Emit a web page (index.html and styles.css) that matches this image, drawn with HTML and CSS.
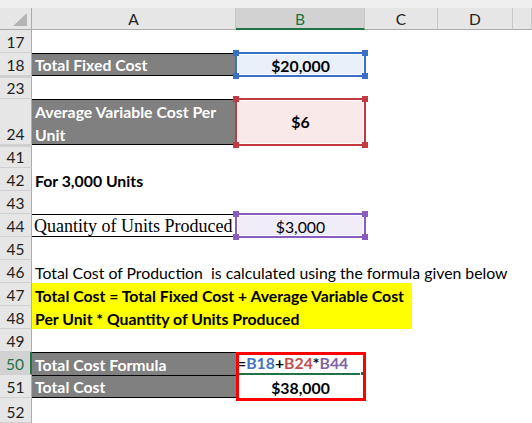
FILE: index.html
```html
<!DOCTYPE html>
<html>
<head>
<meta charset="utf-8">
<title>Total Cost of Production</title>
<link rel="stylesheet" href="styles.css">
</head>
<body>
<div class="topstrip"></div>
<div class="sheet">
  <div class="corner"><span class="tri"></span></div>
  <div class="ch">A</div>
  <div class="ch sel">B</div>
  <div class="ch">C</div>
  <div class="ch">D</div>
  <div class="ch"></div>

  <div class="rh">17</div><div class="c"></div><div class="c"></div><div class="c"></div><div class="c"></div><div class="c"></div>

  <div class="rh">18</div>
  <div class="c g gt gb">Total Fixed Cost</div>
  <div class="c b ref blue"><span class="frame"></span><i class="h tl"></i><i class="h tr"></i><i class="h bl"></i><i class="h br"></i><span class="v bold">$20,000</span></div>
  <div class="c"></div><div class="c"></div><div class="c"></div>

  <div class="rh dbl">23</div><div class="c"></div><div class="c"></div><div class="c"></div><div class="c"></div><div class="c"></div>

  <div class="rh">24</div>
  <div class="c g gt gb wrap">Average Variable Cost Per<br>Unit</div>
  <div class="c b ref red mid"><span class="frame"></span><i class="h tl"></i><i class="h tr"></i><i class="h bl"></i><i class="h br"></i><span class="v bold">$6</span></div>
  <div class="c"></div><div class="c"></div><div class="c"></div>

  <div class="rh dbl">41</div><div class="c"></div><div class="c"></div><div class="c"></div><div class="c"></div><div class="c"></div>

  <div class="rh">42</div><div class="c bold">For 3,000 Units</div><div class="c"></div><div class="c"></div><div class="c"></div><div class="c"></div>

  <div class="rh">43</div><div class="c"></div><div class="c"></div><div class="c"></div><div class="c"></div><div class="c"></div>

  <div class="rh">44</div>
  <div class="c gt gb serif">Quantity of Units Produced</div>
  <div class="c b ref purple"><span class="frame"></span><i class="h tl"></i><i class="h tr"></i><i class="h bl"></i><i class="h br"></i><span class="v">$3,000</span></div>
  <div class="c"></div><div class="c"></div><div class="c"></div>

  <div class="rh">45</div><div class="c"></div><div class="c"></div><div class="c"></div><div class="c"></div><div class="c"></div>

  <div class="rh">46</div><div class="c span pre">Total Cost of Production  is calculated using the formula given below</div>

  <div class="rh">47</div>
  <div class="note"><div class="note-box">Total Cost = Total Fixed Cost + Average Variable Cost<br>Per Unit * Quantity of Units Produced</div></div>
  <div class="rh">48</div>

  <div class="rh">49</div><div class="c"></div><div class="c"></div><div class="c"></div><div class="c"></div><div class="c"></div>

  <div class="rh active">50</div>
  <div class="c g gt">Total Cost Formula</div>
  <div class="c b edit"><span class="v bold"><span class="k">=</span><span class="f-blue">B18</span><span class="k">+</span><span class="f-red">B24</span><span class="k">*</span><span class="f-purple">B44</span></span><i class="fill"></i><span class="mark"></span></div>
  <div class="c"></div><div class="c"></div><div class="c"></div>

  <div class="rh">51</div>
  <div class="c g gt gb">Total Cost</div>
  <div class="c b"><span class="v bold">$38,000</span></div>
  <div class="c"></div><div class="c"></div><div class="c"></div>

  <div class="rh">52</div><div class="c"></div><div class="c"></div><div class="c"></div><div class="c"></div><div class="c"></div>
</div>
</body>
</html>
```

FILE: styles.css
```css
* {
  box-sizing: border-box;
  margin: 0;
  padding: 0;
}

body {
  margin: 0;
  width: 532px;
  height: 423px;
  overflow: hidden;
  background: #ffffff;
  font-family: Lato, "Open Sans", sans-serif;
  font-size: 15.8px;
  color: #000000;
}

.topstrip {
  height: 8px;
  background: #efefef;
}

.sheet {
  display: grid;
  grid-template-columns: 32px 204px 129px 73px 75px 19px;
  grid-template-rows: 22px 23px 23px 23px 46px repeat(11, 23px) 25px;
}

/* headers */
.corner {
  position: relative;
  background: #e6e6e6;
  border-right: 1px solid #ababab;
  border-bottom: 1px solid #ababab;
}

.tri {
  position: absolute;
  right: 4px;
  bottom: 3px;
  width: 0;
  height: 0;
  border-left: 14px solid transparent;
  border-bottom: 13px solid #b4b4b4;
}

.ch {
  display: flex;
  align-items: center;
  justify-content: center;
  background: #e6e6e6;
  border-right: 1px solid #c6c6c6;
  border-bottom: 1px solid #ababab;
  color: #222222;
  font-size: 15.5px;
  padding-top: 1px;
}

.ch.sel {
  background: #d2d2d2;
  color: #217346;
  border-bottom: 2px solid #217346;
}

.rh {
  display: flex;
  align-items: flex-end;
  justify-content: center;
  background: #e6e6e6;
  border-right: 1px solid #ababab;
  border-bottom: 1px solid #d0d0d0;
  color: #222222;
  line-height: 20px;
  font-size: 15.5px;
}

.rh.dbl {
  border-top: 2px solid #d0d0d0;
}

.rh.active {
  background: #d2d2d2;
  color: #217346;
  border-right: 2px solid #217346;
}

/* cells */
.c {
  display: flex;
  align-items: flex-end;
  padding-left: 3px;
  line-height: 20px;
  white-space: nowrap;
}

.bold {
  font-weight: bold;
}

.span {
  grid-column: 2 / 7;
}

.pre {
  white-space: pre;
}

.g {
  background: #808080;
  color: #ffffff;
  font-weight: bold;
}

.gt {
  border-top: 1px solid #000000;
}

.gb {
  border-bottom: 1px solid #000000;
}

.wrap {
  display: block;
  line-height: 23px;
}

.serif {
  font-family: "Liberation Serif", "Times New Roman", serif;
  font-size: 18px;
  padding-left: 2px;
  overflow: hidden;
}

.b {
  position: relative;
  justify-content: center;
  padding-left: 0;
}

.b.mid {
  align-items: center;
}

.v {
  position: relative;
}

/* formula reference highlight */
.ref.blue { background: #e9f0fa; --rc: #3a6fc6; }
.ref.red { background: #f9e9e9; --rc: #c4393f; }
.ref.purple { background: #f1edf8; --rc: #8a5cc0; }

.frame {
  position: absolute;
  left: -1px;
  top: -1px;
  right: -1px;
  bottom: -1px;
  border: 2px solid var(--rc);
  box-shadow: inset 0 0 0 1px #ffffff;
}

.h {
  position: absolute;
  width: 6px;
  height: 6px;
  background: var(--rc);
}

.h.tl { left: -3px; top: -3px; }
.h.tr { right: -3px; top: -3px; }
.h.bl { left: -3px; bottom: -3px; }
.h.br { right: -3px; bottom: -3px; }

/* active editing cell */
.edit {
  justify-content: flex-start;
  padding-left: 1px;
  border-bottom: 2px solid #217346;
  line-height: 20px;
}

.k { color: #000000; }
.f-blue { color: #4472c4; }
.f-red { color: #c0504d; }
.f-purple { color: #8064a2; }

.fill {
  position: absolute;
  right: 0;
  bottom: -3px;
  width: 5px;
  height: 5px;
  background: #217346;
  border: 1px solid #ffffff;
}

.mark {
  position: absolute;
  left: 0;
  top: 0;
  width: 130px;
  height: 49px;
  border: 3px solid #ff0000;
  z-index: 2;
}

/* yellow formula note */
.note {
  grid-column: 2 / 7;
  grid-row: span 2;
}

.note-box {
  width: 380px;
  height: 46px;
  background: #ffff00;
  font-weight: bold;
  line-height: 23px;
  padding-left: 3px;
  padding-top: 1px;
  white-space: nowrap;
}
```
